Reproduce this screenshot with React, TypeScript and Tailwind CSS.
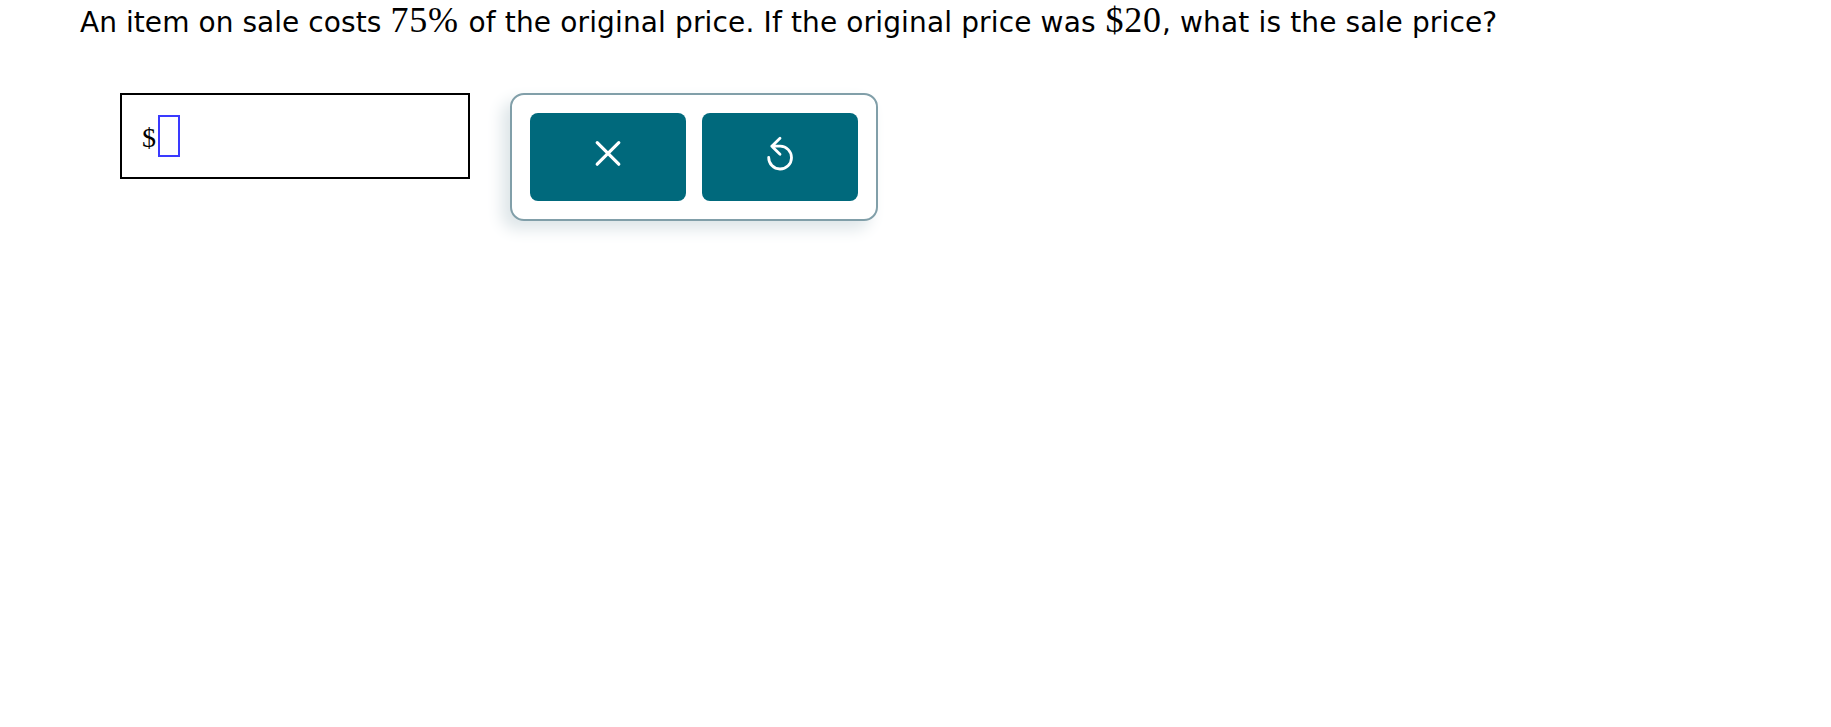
export default function App() {
  return (
    <main className="h-[727px] w-full overflow-hidden bg-white text-black">
      <p className="flex h-[42px] items-baseline whitespace-pre pl-[80px] pt-px font-['DejaVu_Sans',sans-serif] text-[28px] leading-[38px]">
        <span className="w-[310.5px] tracking-[0.06px]">An item on sale costs</span>
        <span className="w-[78px] font-['Liberation_Serif',serif] text-[36px] tracking-[0.7px]">75%</span>
        <span className="w-[637px] tracking-[0.14px]">of the original price. If the original price was</span>
        <span className="w-[56.5px] font-['Liberation_Serif',serif] text-[36px] tracking-[0.7px]">$20</span>
        <span className="tracking-[0.14px]">, what is the sale price?</span>
      </p>
      <div className="flex items-start gap-10 pl-[120px] pt-[51px]">
        <div className="flex h-[86px] w-[350px] items-center border-2 border-black pl-[20px]">
          <span className="w-[16px] pt-[4px] font-['Liberation_Serif',serif] text-[28px] leading-8">$</span>
          <span className="h-[42.5px] w-[22px] border-2 border-[#3a3aff]" />
        </div>
        <div className="flex h-[128px] w-[368px] gap-4 rounded-[14px] border-2 border-[#819fa9] bg-white px-[18px] pt-[18px] shadow-[-8px_8px_16px_#dde5e8]">
          <button aria-label="Clear" className="h-[88px] w-[156px] rounded-lg bg-[#00697c]">
            <svg className="block h-[88px] w-[156px]" viewBox="0 0 156 88" fill="none" stroke="white" strokeWidth="3.2" strokeLinecap="round">
              <path d="M67.2 29.6 88.8 51.2M88.8 29.6 67.2 51.2" />
            </svg>
          </button>
          <button aria-label="Reset" className="h-[88px] w-[156px] rounded-lg bg-[#00697c]">
            <svg className="block h-[88px] w-[156px]" viewBox="0 0 156 88" fill="none" stroke="white" strokeWidth="2.8" strokeLinecap="round" strokeLinejoin="round">
              <path d="M78 25.2 69.8 33.2 78 41.2M69.8 33.2H78.2A11.4 11.4 0 1 1 66.7 44.4" />
            </svg>
          </button>
        </div>
      </div>
    </main>
  );
}
